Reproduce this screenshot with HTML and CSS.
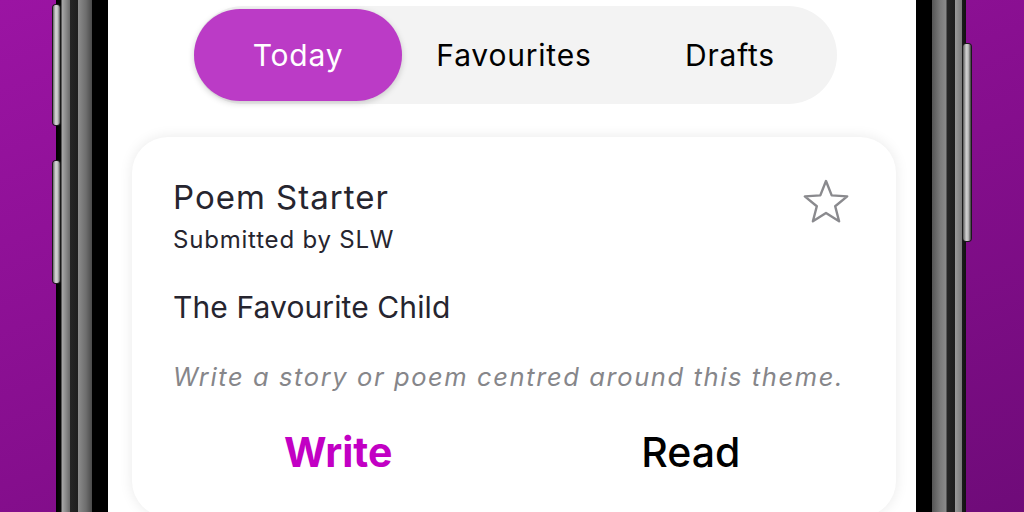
FILE: index.html
```html
<!DOCTYPE html>
<html>
<head>
<meta charset="utf-8">
<link rel="stylesheet" href="styles.css">
</head>
<body>
<div class="stage">
  <div class="side side-left"></div>
  <div class="bezel bezel-left">
    <div class="hw-btn hw-btn-1"></div>
    <div class="hw-btn hw-btn-2"></div>
  </div>
  <div class="screen">
    <div class="tabs">
      <div class="tab tab-active">Today</div>
      <div class="tab">Favourites</div>
      <div class="tab">Drafts</div>
    </div>
    <div class="card">
      <div class="card-head">
        <div class="card-titles">
          <div class="card-title">Poem Starter</div>
          <div class="card-sub">Submitted by SLW</div>
        </div>
        <svg class="star" width="50" height="48" viewBox="0 0 50 48">
          <path d="M25 3 L30.7 17.4 L46.2 18.4 L34.2 28.3 L38.1 43.3 L25 35 L11.9 43.3 L15.8 28.3 L3.8 18.4 L19.3 17.4 Z" fill="none" stroke="#8a8a8e" stroke-width="2.4" stroke-linejoin="round"/>
        </svg>
      </div>
      <div class="card-theme">The Favourite Child</div>
      <div class="card-hint">Write a story or poem centred around this theme.</div>
      <div class="card-actions">
        <div class="action action-write">Write</div>
        <div class="action action-read">Read</div>
      </div>
    </div>
  </div>
  <div class="bezel bezel-right">
    <div class="hw-btn hw-btn-r"></div>
  </div>
  <div class="side side-right"></div>
</div>
</body>
</html>
```

FILE: styles.css
```css
* { box-sizing: border-box; }
html, body {
  margin: 0;
  padding: 0;
  width: 1024px;
  height: 512px;
  overflow: hidden;
}
body {
  font-family: Inter, "Noto Sans", "DejaVu Sans", sans-serif;
  background: linear-gradient(160deg, #9b14a3 0%, #850e8d 55%, #6f0b79 100%);
}
.stage {
  display: flex;
  height: 512px;
}
.side-left { width: 56px; flex: none; }
.side-right { width: 58px; flex: none; }

.bezel {
  position: relative;
  flex: none;
  height: 512px;
}
.bezel-left {
  width: 52px;
  background: linear-gradient(90deg,
    #000 0px, #0a0a0a 5px,
    #a8a8a8 6px, #8a8a8a 10px, #6a6a6a 14px,
    #262626 14px, #1e1e1e 22px,
    #8c8c8c 22px, #6e6e6e 30px, #4a4a4a 36px,
    #000 36px, #000 52px);
}
.bezel-right {
  width: 50px;
  background: linear-gradient(90deg,
    #000 0px, #000 16px,
    #555 16px, #7a7a7a 24px, #8a8a8a 30px,
    #262626 31px, #1e1e1e 39px,
    #9a9a9a 39px, #7a7a7a 46px,
    #1a1a1a 46px, #111 50px);
}
.hw-btn {
  position: absolute;
  width: 7px;
  border-radius: 3px;
  background: linear-gradient(90deg, #6a6a6a, #d8d8d8 40%, #bdbdbd 70%, #555);
  box-shadow: 0 0 0 1px #1a1a1a;
}
.hw-btn-1 { left: -3px; top: 5px; height: 120px; }
.hw-btn-2 { left: -3px; top: 161px; height: 122px; }
.hw-btn-r {
  left: 47px; top: 44px; height: 197px; width: 8px;
  background: linear-gradient(90deg, #555, #d0d0d0 40%, #bdbdbd 65%, #3a3a3a);
}

.screen {
  flex: none;
  width: 808px;
  height: 512px;
  background: #fff;
  padding-top: 6px;
}

.tabs {
  margin-left: 86px;
  width: 643px;
  height: 98px;
  background: #f3f3f3;
  border-radius: 49px;
  display: flex;
  gap: 8px;
  padding: 3px 0;
}
.tab {
  width: 208px;
  height: 92px;
  border-radius: 46px;
  display: flex;
  align-items: center;
  justify-content: center;
  font-size: 30px;
  color: #000;
  letter-spacing: 0.8px;
}
.tab-active {
  background: #bb3bc6;
  color: #fff;
  box-shadow: 0 2px 6px rgba(0,0,0,0.18);
}

.card {
  margin-top: 33px;
  margin-left: 24px;
  width: 764px;
  height: 380px;
  background: #fff;
  border-radius: 36px;
  box-shadow: 0 0 14px rgba(0,0,0,0.09);
  padding: 41px 40px 0 41px;
  color: #26252f;
}
.card-head {
  display: flex;
  justify-content: space-between;
  align-items: flex-start;
}
.card-title {
  font-size: 33px;
  line-height: 38px;
  letter-spacing: 1px;
}
.card-sub {
  margin-top: 10px;
  font-size: 24px;
  line-height: 28px;
  letter-spacing: 0.8px;
}
.star {
  margin-top: 0;
  margin-right: 5px;
}
.card-theme {
  margin-top: 35px;
  font-size: 30px;
  line-height: 36px;
  letter-spacing: 0.1px;
}
.card-hint {
  margin-top: 36px;
  font-size: 25.5px;
  line-height: 32px;
  font-style: italic;
  color: #86868a;
  letter-spacing: 1.6px;
}
.card-actions {
  margin-top: 35px;
  display: flex;
}
.action {
  flex: 1;
  text-align: center;
  font-size: 41px;
  line-height: 48px;
}
.action-write {
  color: #c200c4;
  font-weight: 700;
  padding-right: 12px;
}
.action-read {
  color: #000;
  font-weight: 500;
  padding-left: 10px;
}
```
